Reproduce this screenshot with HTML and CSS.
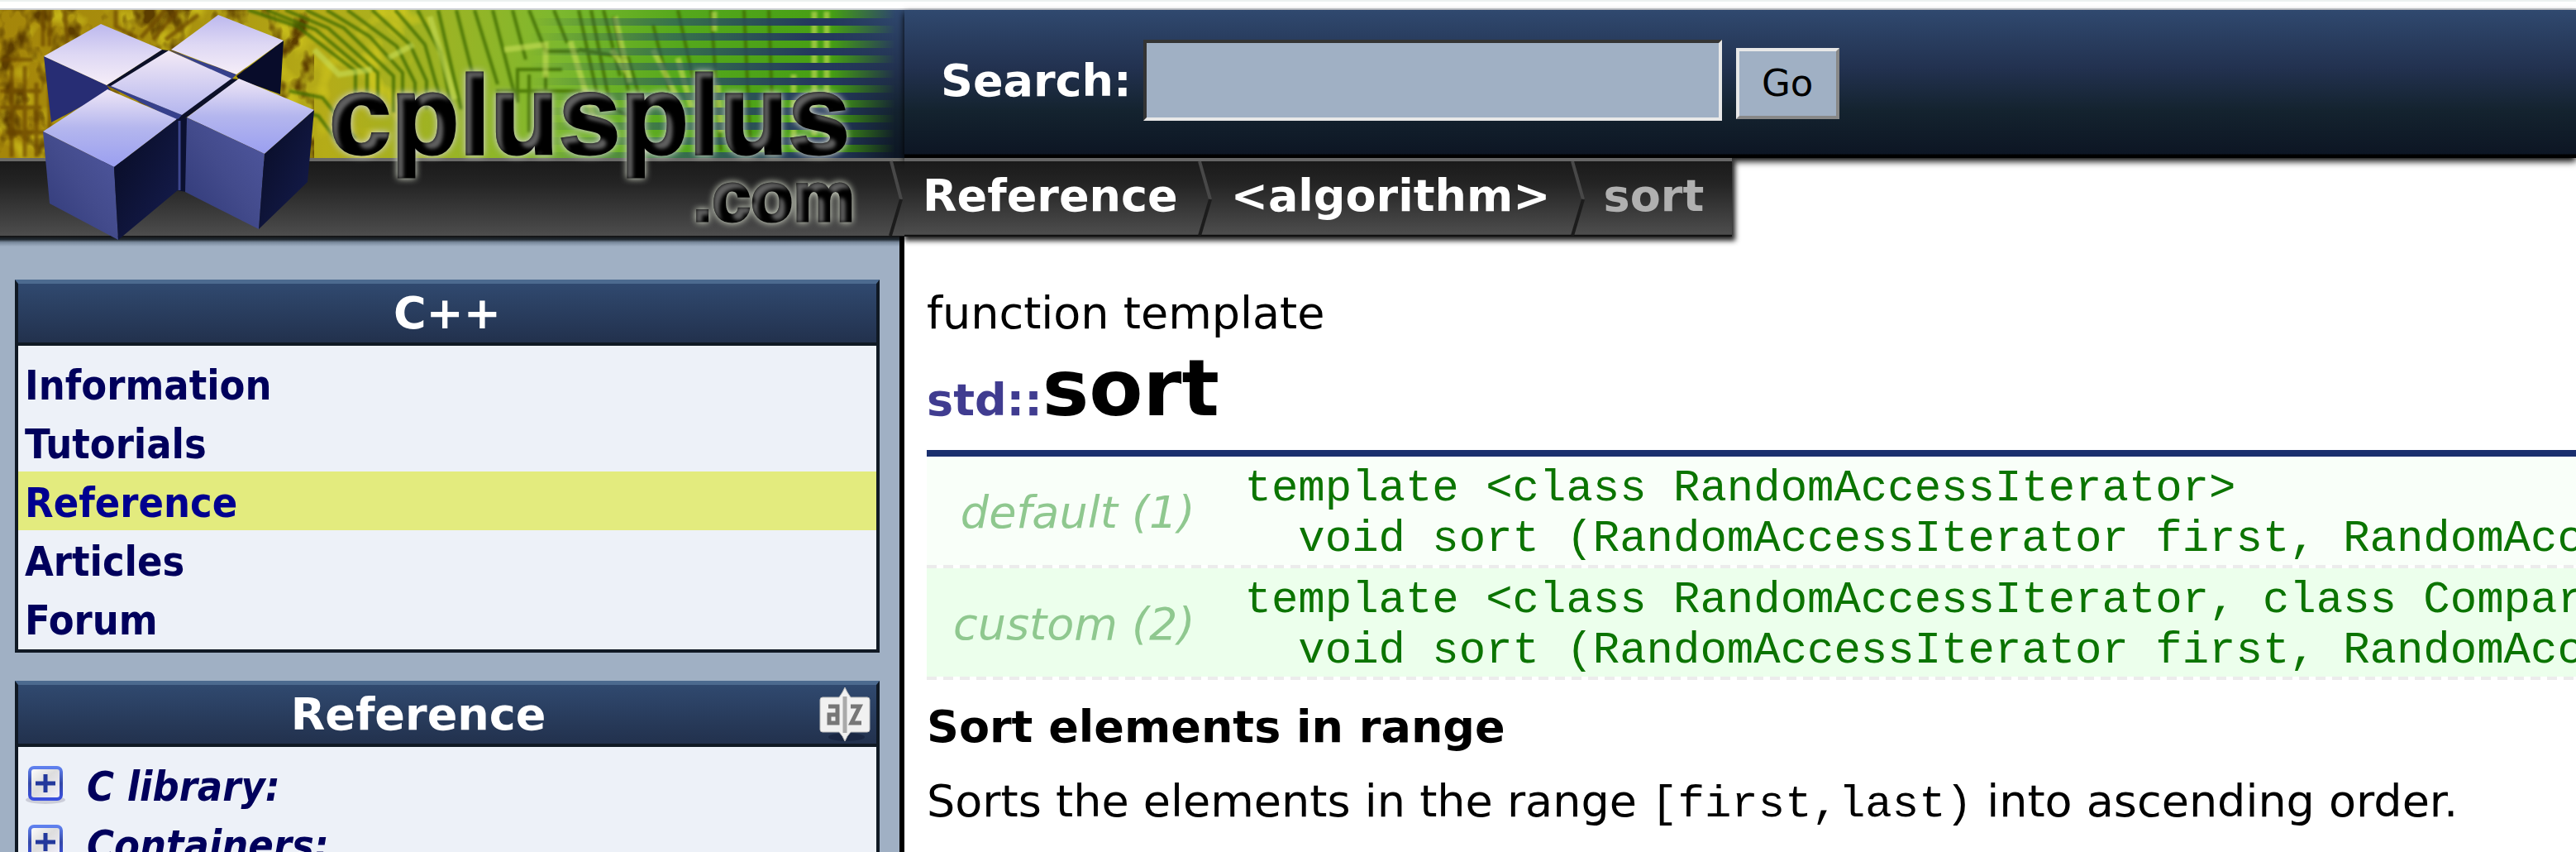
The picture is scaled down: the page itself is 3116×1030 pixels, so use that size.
FILE: index.html
```html
<!DOCTYPE html>
<html lang="en">
<head>
<meta charset="utf-8">
<title>sort - C++ Reference</title>
<link rel="stylesheet" href="styles.css">
</head>
<body>
<div class="page">
  <header class="header">
    <a class="logo" href="#" aria-label="cplusplus.com">
      <svg viewBox="0 12 1094 286" class="logo-art">
        <defs>
          <linearGradient id="night" x1="0" y1="0" x2="0" y2="1">
            <stop offset="0" stop-color="#30496f"/><stop offset=".4" stop-color="#22314f"/>
            <stop offset=".68" stop-color="#14232f"/><stop offset="1" stop-color="#0d1624"/>
          </linearGradient>
          <linearGradient id="board" x1="0" y1="0" x2="1" y2="0">
            <stop offset="0" stop-color="#a5860a"/><stop offset=".2" stop-color="#a8900e"/>
            <stop offset=".36" stop-color="#b5ac18"/><stop offset=".5" stop-color="#9ab425"/>
            <stop offset=".62" stop-color="#7cb82e"/><stop offset=".75" stop-color="#55a81c"/><stop offset="1" stop-color="#3f9a10"/>
          </linearGradient>
          <linearGradient id="fade" gradientUnits="userSpaceOnUse" x1="0" y1="0" x2="1094" y2="0">
            <stop offset=".92" stop-color="#fff"/><stop offset=".99" stop-color="#000"/>
          </linearGradient>
          <mask id="fadeMask"><rect y="12" width="1094" height="180" fill="url(#fade)"/></mask>
          <linearGradient id="scan" gradientUnits="userSpaceOnUse" x1="640" y1="0" x2="980" y2="0">
            <stop offset="0" stop-color="#2a5458" stop-opacity="0"/><stop offset=".5" stop-color="#25506a" stop-opacity=".6"/><stop offset="1" stop-color="#24395c"/>
          </linearGradient>
          <linearGradient id="bar" x1="0" y1="0" x2="0" y2="1">
            <stop offset="0" stop-color="#1a1a1a"/><stop offset=".3" stop-color="#242424"/><stop offset="1" stop-color="#4d4d4d"/>
          </linearGradient>
          <linearGradient id="edge" x1="0" y1="0" x2="0" y2="1">
            <stop offset="0" stop-color="#111"/><stop offset=".35" stop-color="#222b33"/><stop offset=".6" stop-color="#77879a"/><stop offset="1" stop-color="#a0b0c4"/>
          </linearGradient>
          <filter id="grain" x="0" y="0" width="1" height="1" color-interpolation-filters="sRGB">
            <feTurbulence type="fractalNoise" baseFrequency=".04 .03" numOctaves="3" seed="7"/>
            <feColorMatrix values="0 0 0 0 .36  0 0 0 0 .24  0 0 0 0 0  4 0 0 0 -1.9"/>
          </filter>
          <filter id="glint" x="0" y="0" width="1" height="1" color-interpolation-filters="sRGB">
            <feTurbulence type="fractalNoise" baseFrequency=".03 .03" numOctaves="2" seed="21"/>
            <feColorMatrix values="0 0 0 0 .84  0 0 0 0 .8  0 0 0 0 .12  0 4 0 0 -2"/>
          </filter>
          <filter id="soft"><feGaussianBlur stdDeviation="1.6"/></filter>
          <filter id="bevel" x="-.05" y="-.2" width="1.1" height="1.4" color-interpolation-filters="sRGB">
            <feGaussianBlur in="SourceAlpha" stdDeviation="4" result="b"/>
            <feColorMatrix in="b" values="0 0 0 0 .78  0 0 0 0 .8  0 0 0 0 .74  0 0 0 1.3 0" result="halo"/>
            <feOffset in="SourceAlpha" dx="7" dy="7" result="o"/>
            <feComposite in="SourceAlpha" in2="o" operator="out" result="rim"/>
            <feGaussianBlur in="rim" stdDeviation="2" result="rimSoft"/>
            <feColorMatrix in="rimSoft" values="0 0 0 0 .5  0 0 0 0 .5  0 0 0 0 .5  0 0 0 .75 0" result="grey"/>
            <feComposite in="grey" in2="SourceAlpha" operator="in" result="shine"/>
            <feMerge><feMergeNode in="halo"/><feMergeNode in="SourceGraphic"/><feMergeNode in="shine"/></feMerge>
          </filter>
          <linearGradient id="topBack" x1="0" y1="0" x2="0" y2="1"><stop offset="0" stop-color="#bcb8ee"/><stop offset=".5" stop-color="#ded8f4"/><stop offset="1" stop-color="#f6eef8"/></linearGradient>
          <linearGradient id="topMid" x1="0" y1="0" x2="0" y2="1"><stop offset="0" stop-color="#f4eaf6"/><stop offset="1" stop-color="#b4b6ee"/></linearGradient>
          <linearGradient id="topFront" x1="0" y1="0" x2="0" y2="1"><stop offset="0" stop-color="#efe6f6"/><stop offset=".5" stop-color="#b4b6ee"/><stop offset="1" stop-color="#9a9ff0"/></linearGradient>
          <linearGradient id="faceLeft" x1="1" y1="0" x2="0" y2="1"><stop offset="0" stop-color="#5058a0"/><stop offset=".5" stop-color="#434b8c"/><stop offset="1" stop-color="#2f3876"/></linearGradient>
          <linearGradient id="faceDark" x1="0" y1="0" x2="1" y2="1"><stop offset="0" stop-color="#070b22"/><stop offset="1" stop-color="#161d50"/></linearGradient>
        </defs>
        <rect y="12" width="1094" height="180" fill="url(#night)"/>
        <g mask="url(#fadeMask)">
          <rect y="12" width="1094" height="179" fill="url(#board)"/>
          <rect y="12" width="520" height="179" filter="url(#glint)" opacity=".7"/>
          <rect y="12" width="380" height="179" filter="url(#grain)"/>
          <g fill="none" stroke="#6d4600" stroke-width="5" opacity=".7" filter="url(#soft)">
            <path d="M0 72h40M52 12v44M60 12v44M78 12l4 40 20 8M44 100v90M14 80v110M30 80v110M60 90v100M0 110h50M0 130h50M8 160h50M140 12v20l26 14M200 12l-30 34M215 12l-30 36M240 18l-40 30"/>
          </g>
          <g fill="none" stroke="#3d6a00" stroke-width="4" opacity=".8" filter="url(#soft)">
            <path d="M300 12l60 20 70 54v30M322 12l60 24 62 52v40M345 12l52 22 60 54v50M370 12l46 22 60 58v44M395 12l52 32 40 44v44M420 12l60 44 22 44v40M450 12l46 42 20 44v34M478 12l36 42 20 70M505 12l28 52 14 70M530 12l28 120M552 12l28 110M574 12l28 90M596 12l28 108M620 12l16 60M350 110l40 8 40 50M345 130l40 10 30 40M640 90v70M660 90v80M680 84h-54v40M640 12l20 50h40M670 12l16 40M700 12l24 110M715 12l22 110M730 12l20 80M742 20l18 90M700 60l60 10 20 70M790 30l20 80M820 12l20 90M600 110h100l60 30M860 12l12 170M900 12l8 170M930 12l6 170"/>
          </g>
          <g fill="none" stroke="#c9df58" stroke-width="7" opacity=".6" filter="url(#soft)">
            <path d="M380 60l30 30 40-6M470 70l30-16M520 20l30 100M610 60l50-6v40M740 60l20 30M744 20l18 80M690 50l30 100M790 60l30 60M820 70l16 60M864 14v24M868 100l4 60M960 90v90M1000 14v150M985 14v150"/>
          </g>
          <g fill="url(#scan)">
            <rect x="640" y="22" width="454" height="9"/><rect x="640" y="40" width="454" height="9"/><rect x="640" y="58" width="454" height="9"/>
            <rect x="640" y="76" width="454" height="9"/><rect x="640" y="94" width="454" height="9"/><rect x="640" y="112" width="454" height="9"/>
            <rect x="640" y="130" width="454" height="9"/><rect x="640" y="148" width="454" height="9"/><rect x="640" y="166" width="454" height="9"/>
            <rect x="640" y="184" width="454" height="7"/>
          </g>
        </g>
        <rect y="191" width="1094" height="4" fill="#6a6a68"/>
        <rect y="195" width="1094" height="90" fill="url(#bar)"/>
        <rect y="285" width="1094" height="13" fill="url(#edge)"/>
        <rect x="1088" y="286" width="6" height="12" fill="#000"/>
        <path d="M1078 195l12 46" stroke="#484848" stroke-width="4" fill="none"/>
        <path d="M1090 241l-13 44" stroke="#1c1c1c" stroke-width="4" fill="none"/>
        <g>
          <path d="M53 68L129 103L134 110L62 148Z" fill="#272d74"/>
          <path d="M343 49L286 92L289 96L339 114Z" fill="#080c2a"/>
          <path d="M129 103L196 60L204 61L280 95L289 96L220 146L214 144Z" fill="#0c1028"/>
          <path d="M129 103L134 104L220 139L214 146ZM204 60L286 90L280 96Z" fill="#36408c"/>
          <path d="M53 68L122 29L196 60L129 103Z" fill="url(#topBack)"/>
          <path d="M207 60L264 18L343 49L286 90Z" fill="url(#topBack)"/>
          <path d="M134 104L204 61L280 95L220 139Z" fill="url(#topMid)"/>
          <path d="M213 144L227 142L225 232L214 230Z" fill="#0b1030"/>
          <path d="M217 146v84" stroke="#3d468e" stroke-width="3"/>
          <path d="M52 159L130 108L214 144L138 202Z" fill="url(#topFront)"/>
          <path d="M52 159L138 202L143 290L60 246Z" fill="url(#faceLeft)"/>
          <path d="M138 202L214 144L215 230L143 290Z" fill="url(#faceDark)"/>
          <path d="M226 142L289 95L380 133L320 186Z" fill="url(#topFront)"/>
          <path d="M226 142L320 186L313 277L224 232Z" fill="url(#faceLeft)"/>
          <path d="M320 186L380 133L372 220L313 277Z" fill="url(#faceDark)"/>
        </g>
        <g class="wordmark" filter="url(#bevel)">
          <text x="398" y="186" font-size="135">cplusplus</text>
          <text x="1034" y="267" font-size="84" text-anchor="end">.com</text>
        </g>
      </svg>
    </a>
    <form class="search">
      <label for="q">Search:</label>
      <input id="q" type="text" class="search-box">
      <button type="button" class="search-go">Go</button>
    </form>
    <nav class="crumbs" aria-label="Breadcrumb">
      <a href="#">Reference</a>
      <svg class="chevron" viewBox="0 0 22 90"><path d="M6 0l13 46" stroke="#484848" stroke-width="4"/><path d="M19 46L6 90" stroke="#1c1c1c" stroke-width="4"/></svg>
      <a href="#">&lt;algorithm&gt;</a>
      <svg class="chevron" viewBox="0 0 22 90"><path d="M6 0l13 46" stroke="#484848" stroke-width="4"/><path d="M19 46L6 90" stroke="#1c1c1c" stroke-width="4"/></svg>
      <span>sort</span>
    </nav>
  </header>

  <div class="columns">
    <aside class="sidebar">
      <section class="panel">
        <h2 class="panel-title">C++</h2>
        <ul class="menu">
          <li><a href="#">Information</a></li>
          <li><a href="#">Tutorials</a></li>
          <li><a href="#" class="current">Reference</a></li>
          <li><a href="#">Articles</a></li>
          <li><a href="#">Forum</a></li>
        </ul>
      </section>
      <section class="panel">
        <h2 class="panel-title">
          <svg class="az" viewBox="0 0 64 66">
            <ellipse cx="34" cy="61" rx="22" ry="5" fill="#14203a" opacity=".6"/>
            <path d="M5 13h20l4-6 3-6 3 6 4 6h20q3 0 3 3v36q0 3-3 3H39l-4 5-3 6-3-6-4-5H5q-3 0-3-3V16q0-3 3-3z" fill="#f1f1f1" stroke="#bbb" stroke-width="1"/>
            <path d="M32 12v44" stroke="#aaa" stroke-width="5"/>
            <path d="M12 24h11v20H13V34h9M39 24h11L40 44h12" fill="none" stroke="#777" stroke-width="5"/>
          </svg>
          Reference
        </h2>
        <ul class="menu tree">
          <li><svg class="plus" viewBox="0 0 48 48"><use href="#plus-icon"/></svg><a href="#">C library:</a></li>
          <li><svg class="plus" viewBox="0 0 48 48"><use href="#plus-icon"/></svg><a href="#">Containers:</a></li>
        </ul>
      </section>
    </aside>

    <main class="content">
      <p class="kind">function template</p>
      <h1 class="name"><span>std::</span>sort</h1>
      <table class="signatures">
        <tr>
          <th scope="row">default (1)</th>
          <td><pre>template &lt;class RandomAccessIterator&gt;
  void sort (RandomAccessIterator first, RandomAccessIterator last);</pre></td>
        </tr>
        <tr>
          <th scope="row">custom (2)</th>
          <td><pre>template &lt;class RandomAccessIterator, class Compare&gt;
  void sort (RandomAccessIterator first, RandomAccessIterator last, Compare comp);</pre></td>
        </tr>
      </table>
      <h2 class="summary">Sort elements in range</h2>
      <p class="text">Sorts the elements in the range <code>[first,last)</code> into ascending order.</p>
    </main>
  </div>
</div>
<svg width="0" height="0" class="sprites">
  <defs>
    <linearGradient id="plusFill" x1="0" y1="0" x2="1" y2="1"><stop offset="0" stop-color="#fff"/><stop offset=".45" stop-color="#ddd"/><stop offset="1" stop-color="#f4f2ff"/></linearGradient>
    <linearGradient id="plusEdge" x1="0" y1="0" x2="0" y2="1"><stop offset="0" stop-color="#5f80ee"/><stop offset=".5" stop-color="#3448a8"/><stop offset="1" stop-color="#3a4fe0"/></linearGradient>
    <symbol id="plus-icon" viewBox="0 0 48 48">
      <ellipse cx="24" cy="42" rx="24" ry="5" fill="#99a" opacity=".4"/>
      <rect x="5" y="3" width="38" height="38" rx="5" fill="url(#plusFill)" stroke="url(#plusEdge)" stroke-width="4"/>
      <path d="M24 11v22M12 22h24" stroke="#23389c" stroke-width="5"/>
    </symbol>
  </defs>
</svg>
</body>
</html>
```
FILE: styles.css
```css
* { box-sizing: border-box; margin: 0; padding: 0; }

body {
  background: #fff;
  color: #000;
  font: 54px/66px "DejaVu Sans", Verdana, sans-serif;
}

a { color: inherit; text-decoration: none; }
ul { list-style: none; }
.sprites { position: absolute; }

.page {
  display: flex;
  flex-direction: column;
  height: 100vh;
  overflow: hidden;
  padding-top: 10px;
  background: linear-gradient(#ecf1f0 0 2px, #fff 2px);
}

/* header */
.header {
  flex: none;
  display: grid;
  grid-template-columns: 1094px 1fr;
  grid-template-rows: 179px 107px;
  border-top: 2px solid #d0d3d8;
}
.logo { grid-row: 1 / 3; }
.logo-art { display: block; width: 100%; height: 100%; }
.wordmark {
  font-family: "Liberation Sans", Arial, sans-serif;
  font-weight: bold;
  fill: #000;
  stroke: #000;
  stroke-width: 3px;
}

.search {
  display: flex;
  align-items: baseline;
  padding: 36px 44px 0;
  background: linear-gradient(#30496f, #22314f 40%, #14232f 68%, #0d1624 97%, #000 98%);
  box-shadow: 0 4px 8px #000;
  color: #fff;
  font-weight: bold;
}
.search-box {
  width: 700px;
  height: 98px;
  margin: 0 17px 0 14px;
  padding: 0 8px;
  border: 4px inset;
  border-color: #888 #e8e8e8 #e8e8e8 #888;
  background: #a0b0c4;
  font: inherit;
}
.search-go {
  width: 125px;
  height: 86px;
  border: 4px solid;
  border-color: #e8e8e8 #888 #888 #e8e8e8;
  background: #a0b0c4;
  color: #000;
  font: 45px/54px "DejaVu Sans", Verdana, sans-serif;
}

.crumbs {
  position: relative;
  justify-self: start;
  display: flex;
  height: 95px;
  padding-right: 14px;
  border-top: 4px solid #666;
  background: linear-gradient(#1a1a1a, #242424 30%, #4d4d4d 97%, #111 98%);
  box-shadow: 2px 3px 6px 2px #222;
  clip-path: inset(0 -12px -12px 0);
  color: #fff;
  font-weight: bold;
  line-height: 84px;
}
.crumbs a, .crumbs span { padding: 0 20px 0 22px; }
.crumbs span { color: #b0b0b0; }
.chevron { width: 22px; height: 90px; fill: none; }

/* body columns */
.columns {
  flex: 1;
  min-height: 0;
  display: grid;
  grid-template-columns: 1094px minmax(0, 1fr);
  overflow: hidden;
}

.sidebar {
  padding: 40px 24px 0 18px;
  border-right: 6px solid #000;
  background: #a0b0c4;
}
.panel {
  margin-bottom: 34px;
  padding-bottom: 2px;
  border: 4px solid #101924;
  border-top: 5px solid #4c6a8f;
  background: #edf1f8;
}
.panel-title {
  border-bottom: 4px solid #101924;
  background: linear-gradient(#30496f, #22314d);
  color: #fff;
  font-size: 54px;
  line-height: 71px;
  text-align: center;
}
.az { float: right; width: 64px; height: 66px; margin: 2px 6px 0 0; }

.menu {
  padding-top: 10px;
  color: #00005c;
  font: bold 50px/66px "DejaVu Sans Condensed", Tahoma, sans-serif;
}
.menu a { display: block; padding: 5px 8px 0; }
.menu .current { background: #e3eb7e; color: #000090; }
.tree { font-style: italic; }
.tree li { display: flex; align-items: center; padding-left: 9px; }
.tree a { padding-left: 26px; }
.plus { width: 48px; height: 48px; }

.content { padding: 48px 0 0 27px; }
.kind { white-space: nowrap; }
.name {
  padding-bottom: 18px;
  border-bottom: 8px solid #1a2f6e;
  font-size: 95px;
  line-height: 114px;
}
.name span { color: #403c90; font-size: 54px; line-height: 54px; }

.signatures { border-collapse: collapse; min-width: 100%; }
.signatures tr {
  background: repeating-linear-gradient(90deg, #ececec 0 12px, #fff 12px 20px) bottom / 100% 4px no-repeat #f9fff9;
}
.signatures tr:nth-child(2) { background-color: #ecffec; }
.signatures th {
  padding: 0 28px 0 32px;
  color: #8fc88f;
  font-weight: normal;
  font-style: italic;
  text-align: right;
  white-space: nowrap;
}
.signatures td { padding: 8px 32px 5px; }
.signatures pre {
  color: #0b7400;
  font: 54px/61px "Liberation Mono", "Courier New", monospace;
}

.summary { margin: 24px 0; font-size: 54px; }
.text { white-space: nowrap; }
code { font: 54px/61px "Liberation Mono", "Courier New", monospace; }
```
